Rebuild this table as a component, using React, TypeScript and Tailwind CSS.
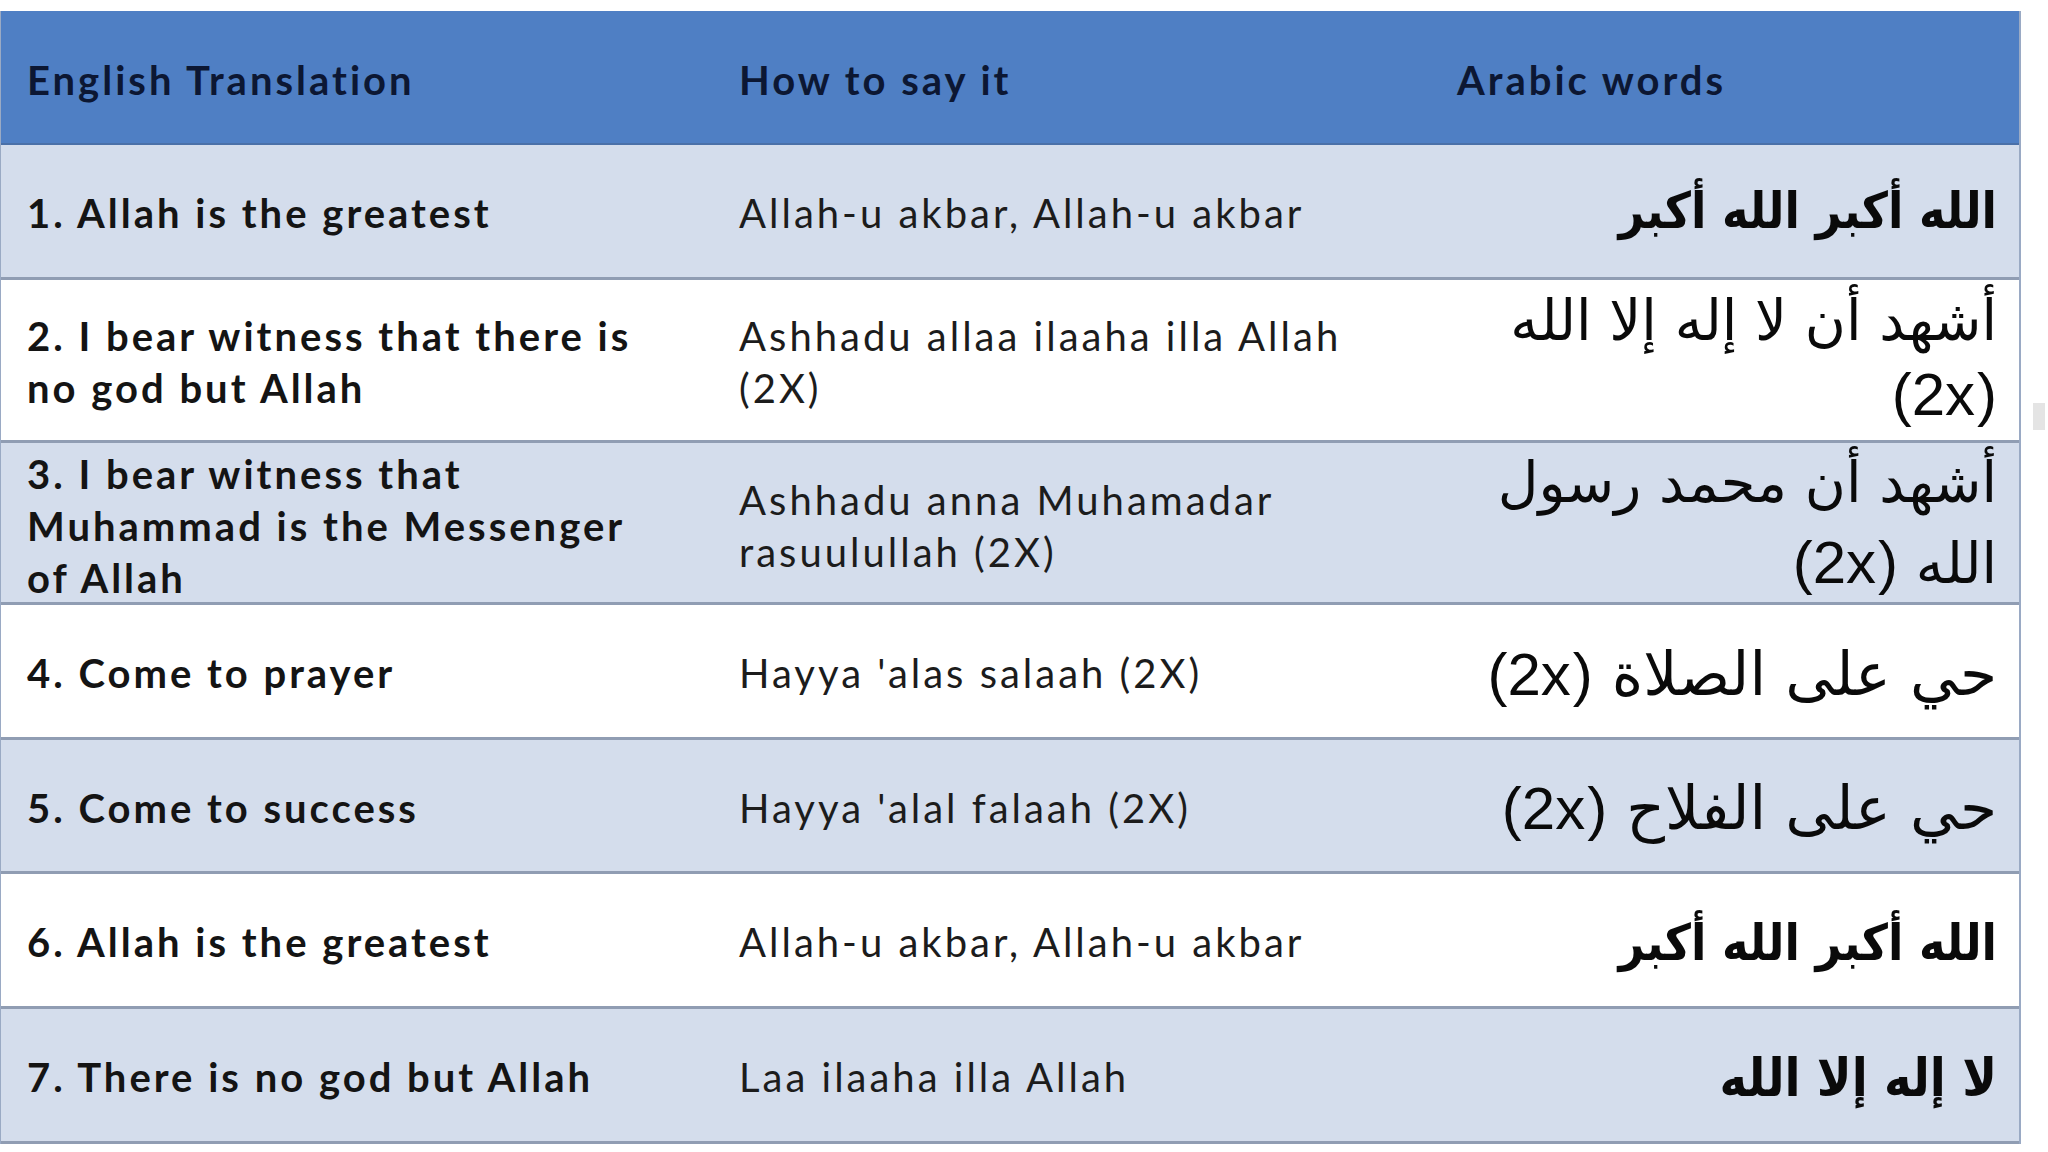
import React from "react"

type Row = {
    english: React.ReactNode
    say: React.ReactNode
    arabic: React.ReactNode
    arabicClass: string
    height: string
}

// the "(2x)" in the arabic column is set in a latin face, a bit larger
const Twice = () => (
    <span className="font-['Liberation_Sans',sans-serif] font-normal text-[60px] tracking-[2px]">(2x)</span>
)

const rows: Row[] = [
    {
        english: "1. Allah is the greatest",
        say: "Allah-u akbar, Allah-u akbar",
        arabic: "الله أكبر الله أكبر",
        arabicClass: "font-bold text-[50px] leading-[80px] font-['DejaVu_Sans_Condensed','DejaVu_Sans',sans-serif] [font-stretch:condensed]",
        height: "h-[135px]",
    },
    {
        english: <>2. I bear witness that there is<br />no god but Allah</>,
        say: <>Ashhadu allaa ilaaha illa Allah<br />(2X)</>,
        arabic: <>أشهد أن لا إله إلا الله<br /><Twice /></>,
        arabicClass: "text-[56px] leading-[74px] pb-[4px]",
        height: "h-[163px]",
    },
    {
        english: <>3. I bear witness that<br />Muhammad is the Messenger<br />of Allah</>,
        say: <>Ashhadu anna Muhamadar<br />rasuulullah (2X)</>,
        arabic: <>أشهد أن محمد رسول<br />الله <Twice /></>,
        arabicClass: "text-[56px] leading-[80px]",
        height: "h-[162px]",
    },
    {
        english: "4. Come to prayer",
        say: "Hayya 'alas salaah (2X)",
        arabic: <>حي على الصلاة <Twice /></>,
        arabicClass: "text-[60px] leading-[80px] pt-[6px]",
        height: "h-[135px]",
    },
    {
        english: "5. Come to success",
        say: "Hayya 'alal falaah (2X)",
        arabic: <>حي على الفلاح <Twice /></>,
        arabicClass: "text-[60px] leading-[80px] pt-[6px]",
        height: "h-[134px]",
    },
    {
        english: "6. Allah is the greatest",
        say: "Allah-u akbar, Allah-u akbar",
        arabic: "الله أكبر الله أكبر",
        arabicClass: "font-bold text-[50px] leading-[80px] pt-[6px] font-['DejaVu_Sans_Condensed','DejaVu_Sans',sans-serif] [font-stretch:condensed]",
        height: "h-[135px]",
    },
    {
        english: "7. There is no god but Allah",
        say: "Laa ilaaha illa Allah",
        arabic: "لا إله إلا الله",
        arabicClass: "font-bold text-[52px] leading-[80px] pt-[6px] font-['DejaVu_Sans_Condensed','DejaVu_Sans',sans-serif] [font-stretch:condensed]",
        height: "h-[135px]",
    },
]

export default function App() {
    return (
        <div className="relative w-[2048px] h-[1152px] bg-white pt-[11px] overflow-hidden">
            <div className="w-[2021px] border-l border-r-2 border-[#9aaac4]">
                {/* header */}
                <div className="grid grid-cols-[712px_718px_590px] h-[134px] items-center pt-[5px] bg-[#4f7fc4] border-b-2 border-[#4a70a8] font-['Lato',sans-serif] font-bold text-[40px] tracking-[3px] text-[#0c1733]">
                    <div className="pl-[26px]">English Translation</div>
                    <div className="pl-[26px]">How to say it</div>
                    <div className="pl-[26px]">Arabic words</div>
                </div>

                {rows.map((row, i) => (
                    <div
                        key={i}
                        className={`grid grid-cols-[712px_718px_590px] items-center border-b-[3px] border-[#909db3] ${row.height} ${i % 2 === 0 ? "bg-[#d4ddec]" : "bg-white"}`}
                    >
                        <div className="pl-[26px] pt-[4px] font-['Lato',sans-serif] font-bold text-[40px] tracking-[3px] leading-[52px] text-[#141414]">
                            {row.english}
                        </div>
                        <div className="pl-[26px] pt-[4px] font-['Lato',sans-serif] text-[40px] tracking-[3px] leading-[52px] text-[#1c1c1c]">
                            {row.say}
                        </div>
                        <div
                            dir="rtl"
                            className={`pr-[24px] text-right font-['DejaVu_Sans',sans-serif] text-[#0a0a0a] ${row.arabicClass}`}
                        >
                            {row.arabic}
                        </div>
                    </div>
                ))}
            </div>

            {/* stray scrollbar fragment at the right edge */}
            <div className="absolute left-[2033px] top-[403px] w-[12px] h-[27px] bg-[#e4e4e4]" />
        </div>
    )
}
